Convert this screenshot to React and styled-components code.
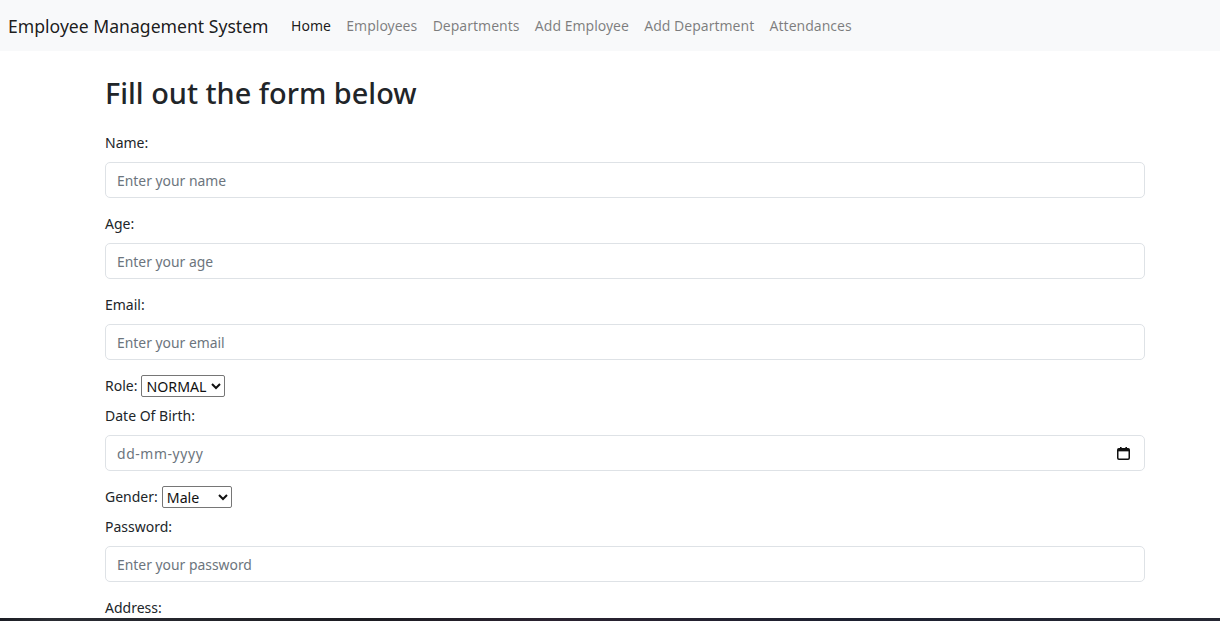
import React from "react";
import styled, { createGlobalStyle } from "styled-components";

const links = [
  { label: "Home", active: true },
  { label: "Employees" },
  { label: "Departments" },
  { label: "Add Employee" },
  { label: "Add Department" },
  { label: "Attendances" },
];

function CalendarIcon() {
  return (
    <svg width="13" height="13" viewBox="0 0 13 13" aria-hidden="true">
      <rect x="3" y="0" width="1.6" height="2.5" fill="#111" />
      <rect x="8.4" y="0" width="1.6" height="2.5" fill="#111" />
      <rect x="0.75" y="1.75" width="11.5" height="10.5" rx="1.2" fill="none" stroke="#111" strokeWidth="1.5" />
      <rect x="0.75" y="1.75" width="11.5" height="2.6" fill="#111" />
    </svg>
  );
}

function App() {
  return (
    <>
      <GlobalStyle />
      <Navbar>
        <Brand href="#">Employee Management System</Brand>
        <NavList>
          {links.map((l) => (
            <NavLink key={l.label} href="#" $active={l.active}>
              {l.label}
            </NavLink>
          ))}
        </NavList>
      </Navbar>

      <Main>
        <Title>Fill out the form below</Title>
        <form onSubmit={(e) => e.preventDefault()}>
          <Group>
            <Label htmlFor="name">Name:</Label>
            <Input id="name" placeholder="Enter your name" />
          </Group>
          <Group>
            <Label htmlFor="age">Age:</Label>
            <Input id="age" placeholder="Enter your age" />
          </Group>
          <Group>
            <Label htmlFor="email">Email:</Label>
            <Input id="email" placeholder="Enter your email" />
          </Group>

          <InlineRow>
            <InlineLabel htmlFor="role">Role:</InlineLabel>
            <Select id="role" defaultValue="NORMAL">
              <option>NORMAL</option>
              <option>ADMIN</option>
            </Select>
          </InlineRow>

          <Group>
            <Label htmlFor="dob">Date Of Birth:</Label>
            <DateField>
              <DateInput id="dob" placeholder="dd-mm-yyyy" />
              <CalendarIcon />
            </DateField>
          </Group>

          <InlineRow>
            <InlineLabel htmlFor="gender">Gender:</InlineLabel>
            <Select id="gender" defaultValue="Male" $width="70px">
              <option>Male</option>
              <option>Female</option>
              <option>Other</option>
            </Select>
          </InlineRow>

          <Group>
            <Label htmlFor="password">Password:</Label>
            <Input id="password" type="password" placeholder="Enter your password" />
          </Group>
          <Group>
            <Label htmlFor="address">Address:</Label>
          </Group>
        </form>
      </Main>
      <TaskbarEdge />
    </>
  );
}

export default App;

///////////////////////////////////////////////////////////////////////////
//////  STYLED COMPONENTS

const GlobalStyle = createGlobalStyle`
  html, body {
    margin: 0;
    background: #fff;
    color: #212529;
    font-family: "Noto Sans", "Open Sans", Arial, sans-serif;
    overflow: hidden;
  }
  * { box-sizing: border-box; }
`;

const Navbar = styled.nav`
  height: 51px;
  background: #f8f9fa;
  display: flex;
  align-items: center;
  padding: 0 8px;
`;

const Brand = styled.a`
  font-size: 17.6px;
  color: rgba(0, 0, 0, 0.9);
  text-decoration: none;
  margin-right: 15px;
`;

const NavList = styled.div`
  display: flex;
  align-items: center;
`;

const NavLink = styled.a`
  font-size: 14px;
  padding: 0 7.5px;
  margin-right: 0.4px;
  text-decoration: none;
  color: ${(p) => (p.$active ? "rgba(0, 0, 0, 0.9)" : "rgba(0, 0, 0, 0.5)")};
`;

const Main = styled.main`
  width: 1040px;
  margin-left: 105px;
  padding-top: 24px;
`;

const Title = styled.h1`
  margin: 0 0 21px;
  font-size: 28.9px;
  font-weight: 500;
  line-height: 36px;
`;

const Group = styled.div`
  margin-bottom: 15px;
`;

const Label = styled.label`
  display: block;
  font-size: 14px;
  line-height: 22px;
  margin-bottom: 8px;
`;

const Input = styled.input`
  display: block;
  width: 100%;
  height: 36px;
  padding: 0 11px;
  font-family: inherit;
  font-size: 13.9px;
  color: #212529;
  background: #fff;
  border: 1px solid #dee2e6;
  border-radius: 5px;
  outline: none;

  &::placeholder {
    color: #6c757d;
  }
`;

const DateField = styled.div`
  height: 36px;
  display: flex;
  align-items: center;
  justify-content: space-between;
  padding: 0 14px 0 11px;
  border: 1px solid #dee2e6;
  border-radius: 5px;
  background: #fff;
`;

const DateInput = styled.input`
  flex: 1;
  border: 0;
  outline: none;
  padding: 0;
  font-family: inherit;
  font-size: 13.9px;
  letter-spacing: 0.6px;
  &::placeholder {
    color: #6c757d;
  }
`;

const InlineRow = styled.div`
  display: flex;
  align-items: center;
  height: 22px;
  margin-bottom: 8px;
`;

const InlineLabel = styled.label`
  font-size: 14px;
  line-height: 22px;
  margin-right: 4px;
`;

const Select = styled.select`
  height: 22px;
  width: ${(p) => p.$width || "84px"};
  font-family: inherit;
  font-size: 14.2px;
  color: #111;
  background: #fff;
  border: 1px solid #767676;
  border-radius: 2px;
  padding: 0;
`;

const TaskbarEdge = styled.div`
  position: fixed;
  left: 0;
  right: 0;
  bottom: 0;
  height: 3px;
  background: linear-gradient(90deg, #1b1d24 0%, #2a2c33 4%, #1c1c22 30%, #2a2230 45%, #1d2030 70%, #252733 100%);
`;
